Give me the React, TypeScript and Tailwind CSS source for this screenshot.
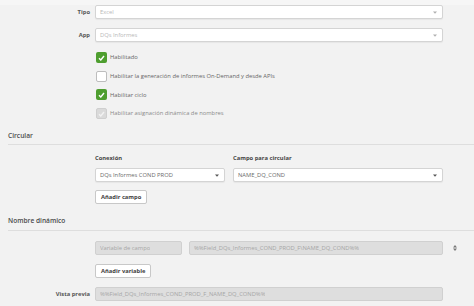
import React from "react"

const font = { fontFamily: '"Open Sans", "Liberation Sans", sans-serif' }

function Caret({ light }: { light?: boolean }) {
  return (
    <svg width="4" height="3" viewBox="0 0 4 3" className="shrink-0">
      <path d="M0 0.5 L4 0.5 L2 2.8 Z" fill={light ? "#b0b0b0" : "#555"} />
    </svg>
  )
}

function Select({ value, muted, className }: { value: string; muted?: boolean; className?: string }) {
  return (
    <div
      className={`h-[14px] flex items-center justify-between pl-[4px] pr-[5px] bg-white border border-[#d4d4d4] rounded-[2px] shadow-[0_1px_1px_rgba(0,0,0,0.05)] ${className ?? ""}`}
    >
      <span className={`text-[5.8px] ${muted ? "text-[#b8b8b8]" : "text-[#6a6a6a]"}`}>{value}</span>
      <Caret light={muted} />
    </div>
  )
}

function Disabled({ value, className }: { value: string; className?: string }) {
  return (
    <div className={`h-[14px] shrink-0 flex items-center pl-[4px] bg-[#dedede] border border-[#d0d0d0] rounded-[2px] ${className ?? ""}`}>
      <span className="text-[5.8px] text-[#a6a6a6] whitespace-nowrap overflow-hidden">{value}</span>
    </div>
  )
}

function Check({ state, label }: { state: "on" | "off" | "disabled"; label: string }) {
  return (
    <div className="h-[11px] flex items-center gap-[3px] ml-[1px]">
      {state === "on" && (
        <div className="w-[11px] h-[11px] rounded-[2px] bg-[#4e9e2f] flex items-center justify-center">
          <svg width="7" height="6" viewBox="0 0 7 6">
            <path d="M1 3.2 L2.8 5 L6 1" stroke="white" strokeWidth="1.4" fill="none" />
          </svg>
        </div>
      )}
      {state === "off" && <div className="w-[11px] h-[11px] rounded-[2px] bg-white border border-[#bdbdbd]" />}
      {state === "disabled" && (
        <div className="w-[11px] h-[11px] rounded-[2px] bg-[#dadada] border border-[#cfcfcf] flex items-center justify-center">
          <svg width="7" height="6" viewBox="0 0 7 6">
            <path d="M1 3.2 L2.8 5 L6 1" stroke="#f2f2f2" strokeWidth="1.4" fill="none" />
          </svg>
        </div>
      )}
      <span className={`text-[5.8px] ${state === "disabled" ? "text-[#8a8a8a]" : "text-[#666]"}`}>{label}</span>
    </div>
  )
}

function Button({ children }: { children: React.ReactNode }) {
  return (
    <div className="flex">
      <div className="h-[14px] flex items-center px-[5px] bg-white border border-[#c8c8c8] rounded-[2px] text-[5.8px] font-bold text-[#404040]">
        {children}
      </div>
    </div>
  )
}

function Row({ label, children }: { label?: string; children: React.ReactNode }) {
  return (
    <div className="flex items-center">
      <div className="w-[90px] text-right text-[5.8px] font-bold text-[#555] shrink-0">{label}</div>
      <div className="ml-[5px] w-[348px] shrink-0">{children}</div>
    </div>
  )
}

function Heading({ children, className }: { children: React.ReactNode; className?: string }) {
  return (
    <div
      className={`ml-[8px] flex items-center border-b border-[#dedede] text-[6.6px] font-semibold text-[#4a4a4a] ${className ?? ""}`}
    >
      {children}
    </div>
  )
}

export default function App() {
  return (
    <div className="w-[474px] h-[306px] bg-[#f2f2f2] overflow-hidden" style={font}>
      <div className="h-[5px] bg-[#f6f6f6]" />
      <Row label="Tipo">
        <Select value="Excel" muted />
      </Row>
      <div className="h-[9px]" />
      <Row label="App">
        <Select value="DQs Informes" muted />
      </Row>
      <div className="h-[10px]" />
      <Row>
        <div className="flex flex-col gap-[7.7px]">
          <Check state="on" label="Habilitado" />
          <Check state="off" label="Habilitar la generación de informes On-Demand y desde APIs" />
          <Check state="on" label="Habilitar ciclo" />
          <Check state="disabled" label="Habilitar asignación dinámica de nombres" />
        </div>
      </Row>

      <Heading className="mt-[8px] h-[18px]">Circular</Heading>
      <Row>
        <div className="flex gap-[8px] mt-[8px]">
          <div className="w-[130px]">
            <div className="text-[5.8px] font-bold text-[#444] h-[10px] leading-[10px] mb-[5px]">Conexión</div>
            <Select value="DQs Informes COND PROD" />
          </div>
          <div className="w-[210px]">
            <div className="text-[5.8px] font-bold text-[#444] h-[10px] leading-[10px] mb-[5px]">Campo para circular</div>
            <Select value="NAME_DQ_COND" />
          </div>
        </div>
        <div className="mt-[8px]">
          <Button>Añadir campo</Button>
        </div>
      </Row>

      <Heading className="mt-[8px] h-[19px]">Nombre dinámico</Heading>
      <div className="h-[10px]" />
      <Row>
        <div className="flex items-center">
          <Disabled value="Variable de campo" className="w-[87px]" />
          <Disabled value="%%Field_DQs_Informes_COND_PROD_F\NAME_DQ_COND%%" className="ml-[7px] w-[254px]" />
          <svg width="4" height="6" viewBox="0 0 4 6" className="ml-[10px] shrink-0">
            <path d="M0 2.5 L2 0 L4 2.5 Z M0 3.5 L2 6 L4 3.5 Z" fill="#777" />
          </svg>
        </div>
      </Row>
      <div className="h-[9px]" />
      <Row>
        <Button>Añadir variable</Button>
      </Row>
      <div className="h-[9px]" />
      <Row label="Vista previa">
        <Disabled value="%%Field_DQs_Informes_COND_PROD_F_NAME_DQ_COND%%" />
      </Row>
    </div>
  )
}
